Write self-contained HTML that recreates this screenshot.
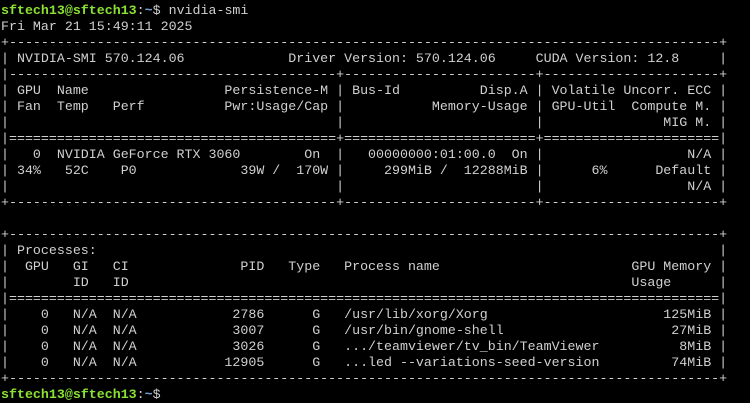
<!DOCTYPE html>
<html><head><meta charset="utf-8"><style>
html,body{margin:0;padding:0;background:#000;width:750px;height:403px;overflow:hidden}
pre{margin:0;padding:3px 0 0 1px;font-family:"Liberation Mono",monospace;font-size:13.3px;line-height:16px;color:#d0d0d0;white-space:pre}
.g{color:#8ae234;font-weight:bold}.b{color:#729fcf;font-weight:bold}
</style></head><body><pre><span class="g">sftech13@sftech13</span>:<span class="b">~</span>$ nvidia-smi
Fri Mar 21 15:49:11 2025
+-----------------------------------------------------------------------------------------+
| NVIDIA-SMI 570.124.06             Driver Version: 570.124.06     CUDA Version: 12.8     |
|-----------------------------------------+------------------------+----------------------+
| GPU  Name                 Persistence-M | Bus-Id          Disp.A | Volatile Uncorr. ECC |
| Fan  Temp   Perf          Pwr:Usage/Cap |           Memory-Usage | GPU-Util  Compute M. |
|                                         |                        |               MIG M. |
|=========================================+========================+======================|
|   0  NVIDIA GeForce RTX 3060        On  |   00000000:01:00.0  On |                  N/A |
| 34%   52C    P0             39W /  170W |     299MiB /  12288MiB |      6%      Default |
|                                         |                        |                  N/A |
+-----------------------------------------+------------------------+----------------------+

+-----------------------------------------------------------------------------------------+
| Processes:                                                                              |
|  GPU   GI   CI              PID   Type   Process name                        GPU Memory |
|        ID   ID                                                               Usage      |
|=========================================================================================|
|    0   N/A  N/A            2786      G   /usr/lib/xorg/Xorg                      125MiB |
|    0   N/A  N/A            3007      G   /usr/bin/gnome-shell                     27MiB |
|    0   N/A  N/A            3026      G   .../teamviewer/tv_bin/TeamViewer          8MiB |
|    0   N/A  N/A           12905      G   ...led --variations-seed-version         74MiB |
+-----------------------------------------------------------------------------------------+
<span class="g">sftech13@sftech13</span>:<span class="b">~</span>$ </pre></body></html>
